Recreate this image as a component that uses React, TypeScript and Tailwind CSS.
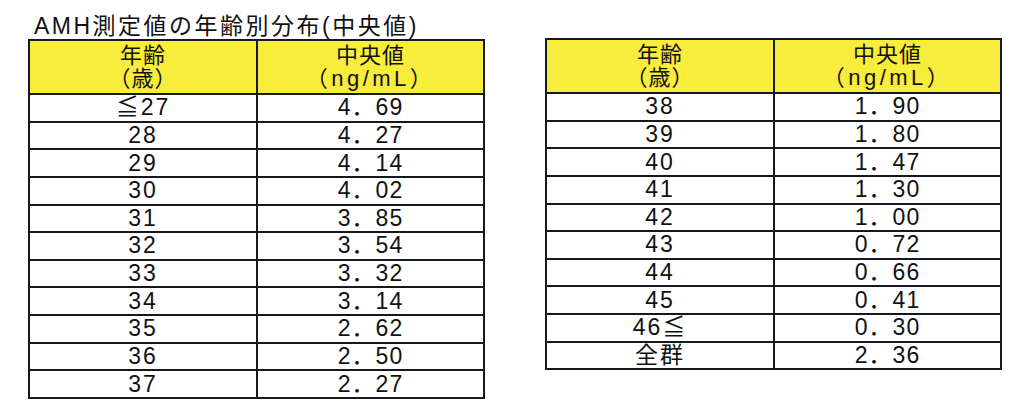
import React from 'react';

const leftRows: [string, string][] = [
  ['≦27', '4．69'],
  ['28', '4．27'],
  ['29', '4．14'],
  ['30', '4．02'],
  ['31', '3．85'],
  ['32', '3．54'],
  ['33', '3．32'],
  ['34', '3．14'],
  ['35', '2．62'],
  ['36', '2．50'],
  ['37', '2．27'],
];

const rightRows: [string, string][] = [
  ['38', '1．90'],
  ['39', '1．80'],
  ['40', '1．47'],
  ['41', '1．30'],
  ['42', '1．00'],
  ['43', '0．72'],
  ['44', '0．66'],
  ['45', '0．41'],
  ['46≦', '0．30'],
  ['全群', '2．36'],
];

function AmhTable({ rows }: { rows: [string, string][] }) {
  return (
    <div className="w-[457px] border-2 border-[#14181f]">
      {/* 見出し */}
      <div className="grid h-[52px] grid-cols-[226px_1fr] bg-[#f8ec3c] text-[22px] leading-[23px]">
        <div className="flex flex-col items-center justify-center">
          <span className="tracking-[1px]">年齢</span>
          <span className="tracking-[1px]">（歳）</span>
        </div>
        <div className="flex flex-col items-center justify-center border-l-2 border-[#14181f]">
          <span className="tracking-[1px]">中央値</span>
          <span className="tracking-[3.5px]">（ng/mL）</span>
        </div>
      </div>
      {rows.map(([age, value]) => (
        <div
          key={age}
          className="grid h-[27.64px] grid-cols-[226px_1fr] border-t-2 border-[#14181f] text-[23px] leading-[25px]"
        >
          <div className="flex items-center justify-center tracking-[2px]">{age}</div>
          <div className="flex items-center justify-center border-l-2 border-[#14181f] tracking-[1px]">
            {value}
          </div>
        </div>
      ))}
    </div>
  );
}

export default function App() {
  return (
    <div
      className="h-[412px] w-[1033px] bg-white pl-[28px] text-[#111]"
      style={{ fontFamily: '"Liberation Sans", "Noto Sans CJK JP", sans-serif' }}
    >
      <div className="flex gap-[60px]">
        <div className="flex flex-col">
          <h1 className="ml-[6px] h-[39px] pt-[14px] text-[23px] font-normal leading-[24px] tracking-[2.5px]">
            AMH測定値の年齢別分布(中央値)
          </h1>
          <AmhTable rows={leftRows} />
        </div>
        <div className="flex flex-col pt-[38px]">
          <AmhTable rows={rightRows} />
        </div>
      </div>
    </div>
  );
}
